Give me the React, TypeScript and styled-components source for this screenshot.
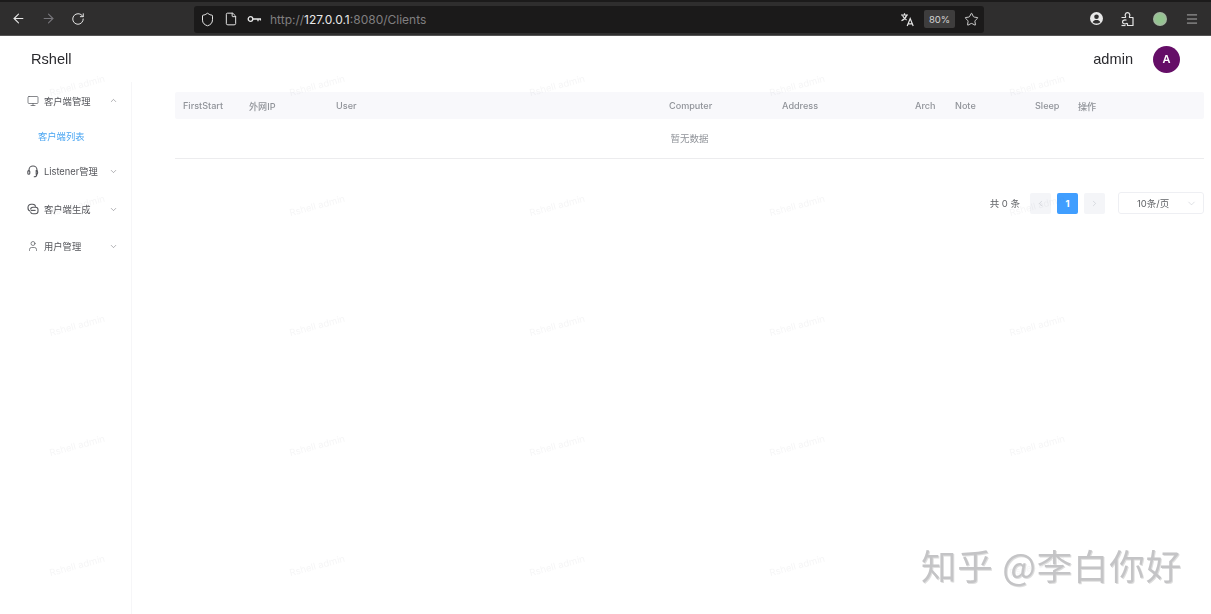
import React from "react";
import styled, { createGlobalStyle } from "styled-components";
import {
  ArrowLeft,
  ArrowRight,
  RotateCw,
  Shield,
  File,
  Star,
  Menu,
  Monitor,
  User,
  ChevronUp,
  ChevronDown,
  ChevronLeft,
  ChevronRight,
} from "lucide-react";

const GlobalStyle = createGlobalStyle`
  html, body { margin: 0; padding: 0; background: #fff; height: 100%; overflow: hidden; }
  * { box-sizing: border-box; }
  body { font-family: Inter, "Noto Sans CJK SC", sans-serif; }
`;

const Page = styled.div`
  position: relative;
  width: 1211px;
  height: 614px;
  overflow: hidden;
  filter: blur(0.45px);
`;

const BrowserBar = styled.div`
  height: 36px;
  background: #2f2e2e;
  border-top: 2px solid #1c1b1b;
  border-bottom: 1px solid #555454;
  display: flex;
  align-items: center;
  color: #e6e6e6;
`;

const NavGroup = styled.div`
  width: 194px;
  display: flex;
  align-items: center;
  gap: 15px;
  padding-left: 11px;
`;

const UrlBar = styled.div`
  width: 790px;
  height: 27px;
  margin-top: 1px;
  background: #1b1a1a;
  border-radius: 3px;
  display: flex;
  align-items: center;
  padding: 0 5px 0 6px;
`;

const UrlIcons = styled.div`
  display: flex;
  align-items: center;
  gap: 9px;
`;

const UrlText = styled.span`
  margin-left: 8px;
  font-size: 12px;
  color: #807f80;
  b {
    font-weight: 400;
    color: #e8e8e8;
  }
`;

const UrlRight = styled.div`
  margin-left: auto;
  display: flex;
  align-items: center;
`;

const ZoomChip = styled.span`
  width: 31px;
  height: 18px;
  margin: 0 9px 0 9px;
  border-radius: 2px;
  background: #3e3d3d;
  font-size: 9.5px;
  color: #d4d4d4;
  display: flex;
  align-items: center;
  justify-content: center;
`;

const ToolGroup = styled.div`
  margin-left: auto;
  display: flex;
  align-items: center;
  gap: 16px;
  padding-right: 12px;
`;

const ProfileDot = styled.span`
  width: 14px;
  height: 14px;
  border-radius: 50%;
  background: radial-gradient(circle, #93c58f 0 35%, #a6b5a4 75%);
  margin: 0 2px;
`;

const Header = styled.header`
  height: 46px;
  display: flex;
  align-items: center;
  justify-content: space-between;
  padding: 0 31px;
`;

const Brand = styled.div`
  font-family: "Liberation Sans", sans-serif;
  font-size: 14.6px;
  color: #2a2a2e;
`;

const UserBox = styled.div`
  display: flex;
  align-items: center;
  gap: 20px;
`;

const UserName = styled.span`
  font-family: "Liberation Sans", sans-serif;
  font-size: 14.6px;
  color: #2a2a2e;
`;

const Avatar = styled.span`
  width: 27px;
  height: 27px;
  border-radius: 50%;
  background: #650e67;
  color: #fff;
  font-size: 11px;
  font-weight: 600;
  display: flex;
  align-items: center;
  justify-content: center;
`;

const Body = styled.div`
  display: flex;
  height: 532px;
`;

const Sidebar = styled.aside`
  width: 132px;
  border-right: 1px solid #f6f6f8;
`;

const MenuRow = styled.div<{ $height: number }>`
  height: ${(p) => p.$height}px;
  display: flex;
  align-items: center;
  padding: 0 13px 0 27px;
  color: #55565b;
  font-size: 9.3px;
  svg {
    flex: none;
  }
`;

const MenuLabel = styled.span`
  margin-left: 5px;
  flex: 1;
  white-space: nowrap;
`;

const SubRow = styled.div`
  height: 34px;
  display: flex;
  align-items: center;
  padding-left: 38px;
  font-size: 9.3px;
  color: #49a5f2;
`;

const Main = styled.main`
  flex: 1;
  padding: 10px 7px 0 43px;
`;

const TableHead = styled.div`
  height: 27px;
  display: grid;
  grid-template-columns: 66px 87px 333px 113px 133px 40px 80px 43px 1fr;
  align-items: center;
  background: #f8f8fb;
  border-radius: 2px;
`;

const HeadCell = styled.span`
  padding-left: 8px;
  font-size: 9.1px;
  font-weight: 500;
  color: #909399;
  white-space: nowrap;
`;

const EmptyRow = styled.div`
  height: 40px;
  padding-bottom: 2px;
  display: flex;
  align-items: center;
  justify-content: center;
  border-bottom: 1px solid #ececee;
  font-size: 9.5px;
  color: #909399;
`;

const Pagination = styled.div`
  margin-top: 33px;
  height: 22px;
  display: flex;
  align-items: center;
  justify-content: flex-end;
`;

const Total = styled.span`
  margin-right: 10px;
  font-size: 9.5px;
  color: #606266;
`;

const PageButton = styled.span<{ $active?: boolean }>`
  width: 21px;
  height: 21px;
  margin-right: 6px;
  border-radius: 2px;
  display: flex;
  align-items: center;
  justify-content: center;
  font-size: 9.5px;
  font-weight: 700;
  background: ${(p) => (p.$active ? "#409eff" : "#f4f5f8")};
  color: ${(p) => (p.$active ? "#fff" : "#c0c4cc")};
`;

const PageSelect = styled.div`
  width: 86px;
  height: 22px;
  margin-left: 7px;
  border: 1px solid #eeeff3;
  border-radius: 3px;
  display: flex;
  align-items: center;
  padding: 0 6px 0 18px;
  font-size: 9.5px;
  color: #606266;
  justify-content: space-between;
`;

const WatermarkLayer = styled.div`
  position: absolute;
  left: -43px;
  top: 25px;
  display: grid;
  grid-template-columns: repeat(5, 240px);
  grid-auto-rows: 120px;
  pointer-events: none;
`;

const Watermark = styled.span`
  display: flex;
  align-items: center;
  justify-content: center;
  font-size: 9.5px;
  color: rgba(120, 120, 125, 0.07);
  transform: rotate(-15deg);
  white-space: nowrap;
`;

const SiteMark = styled.div`
  position: absolute;
  left: 921px;
  top: 538px;
  font-family: "Noto Sans CJK SC", sans-serif;
  font-size: 35.5px;
  line-height: 54px;
  letter-spacing: 0.8px;
  color: #c4c4c6;
  white-space: nowrap;
  text-shadow: 1px 1px 0 #dedede;
`;

const KeyIcon = () => (
  <svg width="15" height="14" viewBox="0 0 15 14" fill="none" stroke="currentColor" strokeWidth="1.3">
    <circle cx="3.5" cy="7" r="2.3" />
    <path d="M5.8 7H14M11 7v2.2M13.4 7v1.6" />
  </svg>
);

const TranslateIcon = () => (
  <svg width="15" height="15" viewBox="0 0 15 15" fill="none" stroke="currentColor" strokeWidth="1.2">
    <path d="M1 3h7M4.5 1.2V3M6.7 3C6 5.5 4 7.6 1.5 8.8M2.6 3.6C3.4 5.6 4.8 7 6.6 8" />
    <path d="M7.2 14l3-7.5 3 7.5M8.2 11.8h4" />
  </svg>
);

const AccountIcon = () => (
  <svg width="15" height="15" viewBox="0 0 15 15">
    <circle cx="7.5" cy="7.5" r="6.5" fill="#e8e8e8" />
    <circle cx="7.5" cy="5.8" r="2.3" fill="#2f2e2e" />
    <path d="M3.6 11.2c.8-1.6 2.2-2.2 3.9-2.2s3.1.6 3.9 2.2c-1 .9-2.4 1.4-3.9 1.4s-2.9-.5-3.9-1.4z" fill="#2f2e2e" />
  </svg>
);

const ExtensionIcon = () => (
  <svg width="15" height="16" viewBox="0 0 15 16" fill="none" stroke="currentColor" strokeWidth="1.2" strokeLinejoin="round">
    <path d="M1.5 6.5H5c.6 0 .8-.5.5-1-.7-1-.4-3.8 2-3.8s2.7 2.8 2 3.8c-.3.5-.1 1 .5 1h3v8H7.5v-1.4c0-.7-.5-.9-1-.6-1 .6-4 .6-4-1.6s3-2.2 4-1.6" />
    <path d="M1.5 14.5h4" />
  </svg>
);

const HeadsetIcon = () => (
  <svg width="12" height="13" viewBox="0 0 12 13" fill="none" stroke="currentColor" strokeWidth="1.1">
    <path d="M2 6.5V5a4 4 0 0 1 8 0v1.5" />
    <rect x="0.8" y="5.6" width="2" height="3.6" rx="1" />
    <path d="M9.2 5.6h.4a1.4 1.4 0 0 1 1 1.3v1a1.4 1.4 0 0 1-1 1.3h-.4zM9.8 9.4c0 1.6-1.3 2.4-3 2.4" />
  </svg>
);

const LinkedIcon = () => (
  <svg width="12" height="12" viewBox="0 0 12 12" fill="none" stroke="currentColor" strokeWidth="1.1">
    <path d="M3.6 8.3A3.2 3.2 0 0 1 1 5.1V4.4A3.2 3.2 0 0 1 4.2 1.2h1.4a3 3 0 0 1 3 2.6" />
    <path d="M3.6 6.6a2.4 2.4 0 0 1 2.4-2.4h2.6A2.4 2.4 0 0 1 11 6.6v1.7a2.5 2.5 0 0 1-2.5 2.5H6a2.5 2.5 0 0 1-2.4-2" />
    <path d="M4 7.4h4.6" />
  </svg>
);

const columns = ["FirstStart", "外网IP", "User", "Computer", "Address", "Arch", "Note", "Sleep", "操作"];

const menu = [
  { label: "Listener管理", icon: <HeadsetIcon />, height: 36 },
  { label: "客户端生成", icon: <LinkedIcon />, height: 40 },
  { label: "用户管理", icon: <User size={12} strokeWidth={1.4} />, height: 34 },
];

export default function App() {
  return (
    <Page>
      <GlobalStyle />
      <BrowserBar>
        <NavGroup>
          <ArrowLeft size={15} strokeWidth={1.7} />
          <ArrowRight size={15} strokeWidth={1.7} color="#77767b" />
          <RotateCw size={14} strokeWidth={1.7} />
        </NavGroup>
        <UrlBar>
          <UrlIcons>
            <Shield size={15} strokeWidth={1.6} />
            <File size={14} strokeWidth={1.7} />
            <KeyIcon />
          </UrlIcons>
          <UrlText>
            http://<b>127.0.0.1</b>:8080/Clients
          </UrlText>
          <UrlRight>
            <TranslateIcon />
            <ZoomChip>80%</ZoomChip>
            <Star size={15} strokeWidth={1.4} />
          </UrlRight>
        </UrlBar>
        <ToolGroup>
          <AccountIcon />
          <ExtensionIcon />
          <ProfileDot />
          <Menu size={14} strokeWidth={1.5} color="#bdbdbd" />
        </ToolGroup>
      </BrowserBar>

      <Header>
        <Brand>Rshell</Brand>
        <UserBox>
          <UserName>admin</UserName>
          <Avatar>A</Avatar>
        </UserBox>
      </Header>

      <Body>
        <Sidebar>
          <MenuRow $height={37}>
            <Monitor size={12} strokeWidth={1.4} />
            <MenuLabel>客户端管理</MenuLabel>
            <ChevronUp size={9} strokeWidth={1.2} />
          </MenuRow>
          <SubRow>客户端列表</SubRow>
          {menu.map((m) => (
            <MenuRow key={m.label} $height={m.height}>
              {m.icon}
              <MenuLabel>{m.label}</MenuLabel>
              <ChevronDown size={9} strokeWidth={1.2} />
            </MenuRow>
          ))}
        </Sidebar>
        <Main>
          <TableHead>
            {columns.map((c) => (
              <HeadCell key={c}>{c}</HeadCell>
            ))}
          </TableHead>
          <EmptyRow>暂无数据</EmptyRow>
          <Pagination>
            <Total>共 0 条</Total>
            <PageButton>
              <ChevronLeft size={9} strokeWidth={1.4} />
            </PageButton>
            <PageButton $active>1</PageButton>
            <PageButton>
              <ChevronRight size={9} strokeWidth={1.4} />
            </PageButton>
            <PageSelect>
              10条/页
              <ChevronDown size={11} strokeWidth={1.1} color="#c0c4cc" />
            </PageSelect>
          </Pagination>
        </Main>
      </Body>

      <WatermarkLayer>
        {Array.from({ length: 25 }).map((_, i) => (
          <Watermark key={i}>Rshell admin</Watermark>
        ))}
      </WatermarkLayer>
      <SiteMark>知乎 @李白你好</SiteMark>
    </Page>
  );
}
